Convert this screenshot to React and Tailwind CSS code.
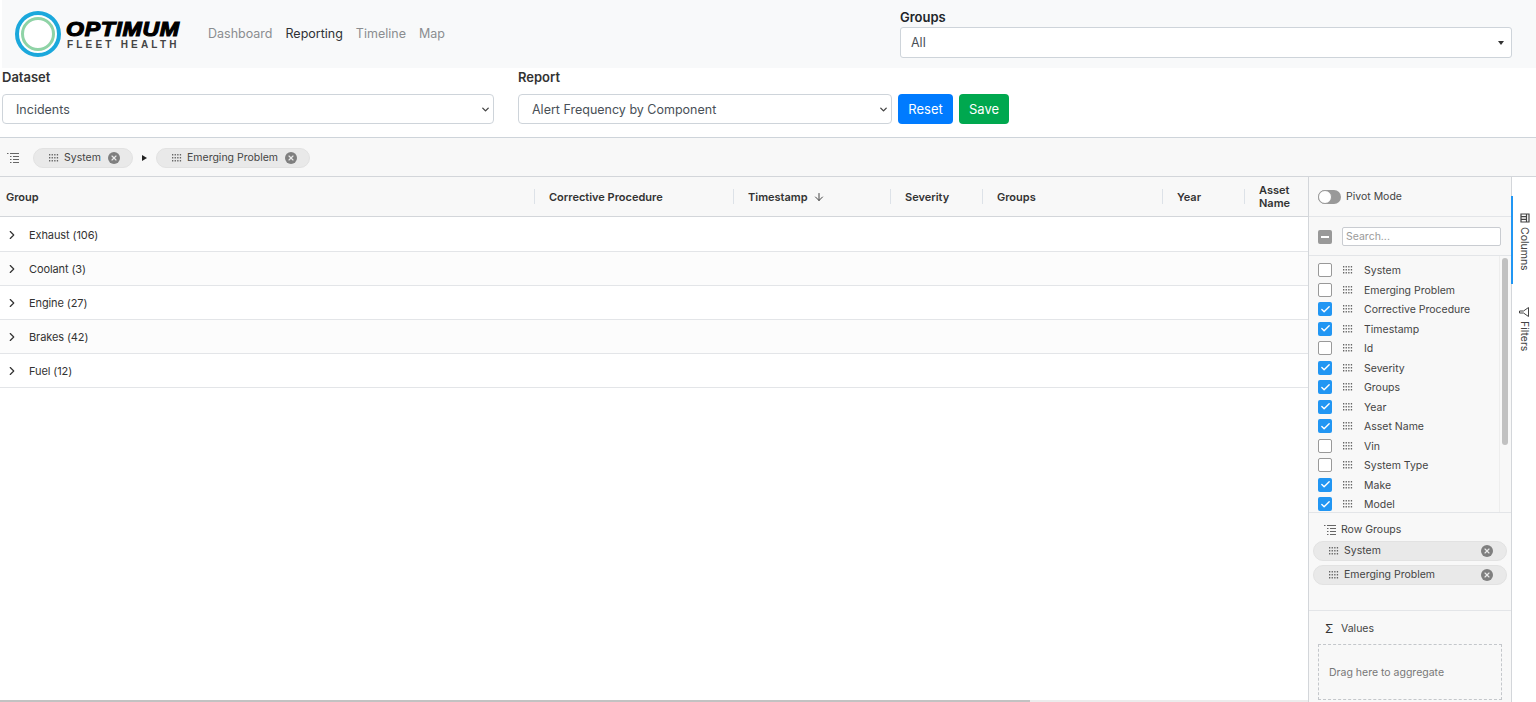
import React from 'react';
import { ChevronRight, ArrowDown, ChevronDown, Check, X } from 'lucide-react';

const FONT = "font-['Inter','Noto_Sans',sans-serif]";

const headerCols = [
  { label: 'Group', w: 'w-[534px]', first: true },
  { label: 'Corrective Procedure', w: 'w-[199px]' },
  { label: 'Timestamp', w: 'w-[157px]', sorted: true },
  { label: 'Severity', w: 'w-[92px]' },
  { label: 'Groups', w: 'w-[180px]' },
  { label: 'Year', w: 'w-[82px]' },
  { label: 'Asset Name', w: 'w-[64px]', wrap: true },
];

const groups = ['Exhaust (106)', 'Coolant (3)', 'Engine (27)', 'Brakes (42)', 'Fuel (12)'];

const columns = [
  ['System', false],
  ['Emerging Problem', false],
  ['Corrective Procedure', true],
  ['Timestamp', true],
  ['Id', false],
  ['Severity', true],
  ['Groups', true],
  ['Year', true],
  ['Asset Name', true],
  ['Vin', false],
  ['System Type', false],
  ['Make', true],
  ['Model', true],
];

function Grip({ className = '' }) {
  return (
    <svg viewBox="0 0 10 8" className={`w-[10px] h-[8px] shrink-0 ${className}`} fill="#666">
      {[0, 3, 6].map((y) =>
        [0, 2.6, 5.2, 7.8].map((x) => <rect key={`${x}-${y}`} x={x} y={y} width="1.3" height="1.5" />)
      )}
    </svg>
  );
}

function GroupIcon() {
  return (
    <svg viewBox="0 0 12 10" className="w-3 h-[10px] shrink-0" stroke="#666" strokeWidth="1" fill="none">
      <path d="M0 .5h1.5M3 .5h9M3 3.5h1.5M6 3.5h6M3 6.5h1.5M6 6.5h6M3 9.5h1.5M6 9.5h6" />
    </svg>
  );
}

function Chip({ label, className = '' }) {
  return (
    <div className={`flex items-center h-[20px] rounded-full bg-[#e9e9e9] border border-[#e2e2e2] text-[10.5px] text-[#444] ${className}`}>
      <Grip className="mr-[5px]" />
      <span className="flex-1 whitespace-nowrap">{label}</span>
      <span className="w-[12px] h-[12px] rounded-full bg-[#7f7f7f] flex items-center justify-center">
        <X className="w-[8px] h-[8px] text-[#e9e9e9]" strokeWidth={3.5} />
      </span>
    </div>
  );
}

function ColumnRow({ label, checked }) {
  return (
    <div className="flex items-center h-[19.5px] shrink-0 pl-[9px] text-[10.5px] text-[#444]">
      {checked ? (
        <span className="w-[14px] h-[14px] rounded-[2px] bg-[#2196f3] flex items-center justify-center shrink-0">
          <Check className="w-[11px] h-[11px] text-white" strokeWidth={3} />
        </span>
      ) : (
        <span className="w-[14px] h-[14px] rounded-[2px] bg-white border border-[#999] shrink-0" />
      )}
      <Grip className="ml-[11px] mr-[11px]" />
      <span className="whitespace-nowrap pt-[2px]">{label}</span>
    </div>
  );
}

function SelectBox({ value, className = '' }) {
  return (
    <div className={`relative h-[30px] ${className}`}>
      <select
        defaultValue={value}
        className="appearance-none w-full h-full bg-white border border-[#ced4da] rounded-[4px] pl-[13px] pr-6 pt-[2px] text-[12.5px] text-[#495057]"
      >
        <option>{value}</option>
      </select>
      <ChevronDown className="absolute right-[3px] top-[10px] w-[11px] h-[11px] text-[#444] pointer-events-none" strokeWidth={3} />
    </div>
  );
}

function Logo() {
  return (
    <div className="flex items-center w-[193px] shrink-0">
      <div className="w-[46px] h-[46px] rounded-full border-[4px] border-[#1ba8dc] bg-white flex items-center justify-center">
        <div className="w-[34px] h-[34px] rounded-full border-[3px] border-[#8fd3a6] bg-white" />
      </div>
      <div className="ml-[5px] flex flex-col items-start">
        <span className="font-['Liberation_Sans',sans-serif] font-bold italic text-[21px] leading-[21px] tracking-[0.6px] text-black [-webkit-text-stroke:1.2px_#000] scale-x-[1.1] origin-left">
          OPTIMUM
        </span>
        <span className="font-['Liberation_Sans',sans-serif] font-bold text-[10px] leading-[11px] tracking-[3.2px] text-[#444] ml-[1px]">
          FLEET HEALTH
        </span>
      </div>
    </div>
  );
}

export default function App() {
  return (
    <div className={`${FONT} h-[702px] w-[1536px] overflow-hidden bg-white flex flex-col`}>
      {/* navbar */}
      <nav className="h-[68px] ml-[2px] bg-[#f8f9fa] flex items-center pl-[13px] shrink-0">
        <Logo />
        <div className="flex items-center gap-[13px] text-[12.5px] w-[692px] text-[#8b8d90]">
          <span>Dashboard</span>
          <span className="text-[#2f3235]">Reporting</span>
          <span>Timeline</span>
          <span>Map</span>
        </div>
        <div className="w-[612px] mb-[2px]">
          <div className="text-[13px] leading-[18px] font-semibold text-[#212529] mb-[1px]">Groups</div>
          <div className="relative h-[31px] bg-white border border-[#ced4da] rounded-[3px] flex items-center pl-[10px] pt-[2px] text-[12.5px] text-[#495057]">
            All
            <span className="absolute right-[7px] top-[13px] border-x-[3px] border-x-transparent border-t-[4px] border-t-[#333]" />
          </div>
        </div>
      </nav>

      {/* dataset / report */}
      <div className="h-[70px] border-b border-[#ced4da] flex items-end pb-[13px] pl-[2px] shrink-0">
        <div className="w-[492px]">
          <div className="text-[13px] leading-[18px] font-semibold text-[#333] mb-[8px]">Dataset</div>
          <SelectBox value="Incidents" />
        </div>
        <div className="w-[374px] ml-[24px]">
          <div className="text-[13px] leading-[18px] font-semibold text-[#333] mb-[8px]">Report</div>
          <SelectBox value="Alert Frequency by Component" />
        </div>
        <button className="ml-[6px] w-[55px] h-[30px] pt-px bg-[#007bff] text-white text-[13px] rounded-[4px]">Reset</button>
        <button className="ml-[6px] w-[50px] h-[30px] pt-px bg-[#00a84f] text-white text-[13px] rounded-[4px]">Save</button>
      </div>

      {/* row group bar */}
      <div className="h-[39px] bg-[#f8f8f8] border-b border-[#d3d6da] flex items-center pl-[7px] pt-px shrink-0">
        <GroupIcon />
        <Chip label="System" className="ml-[14px] w-[100px] pl-[15px] pr-[12px]" />
        <span className="ml-[9px] mr-[9px] border-y-[3.5px] border-y-transparent border-l-[5px] border-l-[#222]" />
        <Chip label="Emerging Problem" className="w-[154px] pl-[15px] pr-[12px]" />
      </div>

      {/* main */}
      <div className="flex-1 flex min-h-0">
        {/* grid */}
        <div className="w-[1308px] flex flex-col relative">
          <div className="h-[40px] bg-[#f8f8f8] border-b border-[#d3d6da] flex items-center shrink-0 text-[11px] font-semibold text-[#333]">
            {headerCols.map((c) => (
              <div key={c.label} className={`${c.w} h-full flex items-center relative pt-px ${c.first ? 'pl-[6px]' : 'pl-[15px]'}`}>
                {!c.first && <span className="absolute left-0 top-[12px] h-[15px] w-px bg-[#dde2e8]" />}
                <span className={c.wrap ? 'leading-[13px] w-[36px]' : 'whitespace-nowrap'}>{c.label}</span>
                {c.sorted && <ArrowDown className="w-[12px] h-[12px] ml-[5px] text-[#444]" strokeWidth={2} />}
              </div>
            ))}
          </div>
          {groups.map((g, i) => (
            <div
              key={g}
              className={`shrink-0 border-b border-[#e3e5e8] flex items-center pl-[5px] text-[11px] tracking-[-0.1px] text-[#333] ${i === 0 ? 'h-[35px] pt-[2px]' : 'h-[34px] pt-px'} ${i % 2 ? 'bg-[#fcfcfc]' : 'bg-white'}`}
            >
              <ChevronRight className="w-[14px] h-[14px] text-[#333] mr-[10px]" strokeWidth={2} />
              {g}
            </div>
          ))}
          <div className="mt-auto h-[2px] bg-[#ececec] shrink-0 flex">
            <div className="w-[1030px] bg-[#c2c2c2]" />
          </div>
        </div>

        {/* side panel */}
        <div className="w-[204px] bg-[#f8f8f8] border-x border-[#d3d6da] flex flex-col text-[#444]">
          <div className="h-[40px] shrink-0 border-b border-[#e3e5e8] flex items-center pl-[9px] text-[10.5px]">
            <span className="relative w-[23px] h-[14px] rounded-full bg-[#999] mr-[5px]">
              <span className="absolute left-0 top-0 w-[14px] h-[14px] rounded-full bg-white border border-[#999]" />
            </span>
            Pivot Mode
          </div>
          <div className="h-[39px] shrink-0 border-b border-[#e3e5e8] flex items-center pl-[9px] pr-[10px] pt-px">
            <span className="w-[14px] h-[14px] rounded-[2px] bg-[#999] flex items-center justify-center shrink-0">
              <span className="w-[8px] h-[2px] bg-white" />
            </span>
            <input
              placeholder="Search..."
              className="ml-[10px] w-[159px] h-[19px] bg-white border border-[#c9ccd1] rounded-[2px] px-[3px] text-[10.5px] placeholder:text-[#9a9a9a] outline-none"
            />
          </div>
          <div className="h-[257px] shrink-0 flex border-b border-[#e3e5e8] overflow-hidden">
            <div className="flex-1 flex flex-col pt-[4.5px] overflow-hidden">
              {columns.map(([label, checked]) => (
                <ColumnRow key={label} label={label} checked={checked} />
              ))}
            </div>
            <div className="w-[12px] border-l border-[#ededed] shrink-0">
              <div className="ml-[2px] mt-[2px] w-[6px] h-[187px] rounded-full bg-[#c1c1c1]" />
            </div>
          </div>
          <div className="h-[98px] shrink-0 border-b border-[#e3e5e8] px-[4px]">
            <div className="h-[28px] flex items-center text-[10.5px] pl-[11px] pt-[5px]">
              <GroupIcon />
              <span className="ml-[5px]">Row Groups</span>
            </div>
            <div className="flex flex-col gap-[4px]">
              <Chip label="System" className="pl-[15px] pr-[13px]" />
              <Chip label="Emerging Problem" className="pl-[15px] pr-[13px]" />
            </div>
          </div>
          <div className="flex-1 min-h-0 px-[9px]">
            <div className="h-[33px] flex items-center text-[10.5px] pl-[7px] pt-[2px]">
              <span className="w-[9px] text-[12px] text-[#333] leading-none">Σ</span>
              <span className="ml-[7px]">Values</span>
            </div>
            <div className="h-[56px] border border-dashed border-[#c4c7cb] flex items-center pl-[10px] pt-px text-[10.5px] text-[#777]">
              Drag here to aggregate
            </div>
          </div>
        </div>

        {/* tool tabs */}
        <div className="flex-1 flex flex-col text-[10.5px] text-[#444]">
          <div className="h-[88px] mt-[19px] border-l-2 border-l-[#2196f3] -ml-px flex justify-center pt-[17px]">
            <span className="[writing-mode:vertical-rl] flex items-center gap-[4px]">
              <svg viewBox="0 0 10 10" className="w-[10px] h-[10px]" fill="none" stroke="#444" strokeWidth="1.2">
                <path d="M1 1h8v8H1zM1 3.7h5.5M1 6.3h5.5M6.5 1v8" />
              </svg>
              Columns
            </span>
          </div>
          <div className="flex justify-center pt-[23px]">
            <span className="[writing-mode:vertical-rl] flex items-center gap-[4px]">
              <svg viewBox="0 0 10 10" className="w-[10px] h-[10px]" fill="none" stroke="#444" strokeWidth="1">
                <path d="M9.5 .5v9L4.5 6H.5V4h4z" />
              </svg>
              Filters
            </span>
          </div>
        </div>
      </div>
    </div>
  );
}
